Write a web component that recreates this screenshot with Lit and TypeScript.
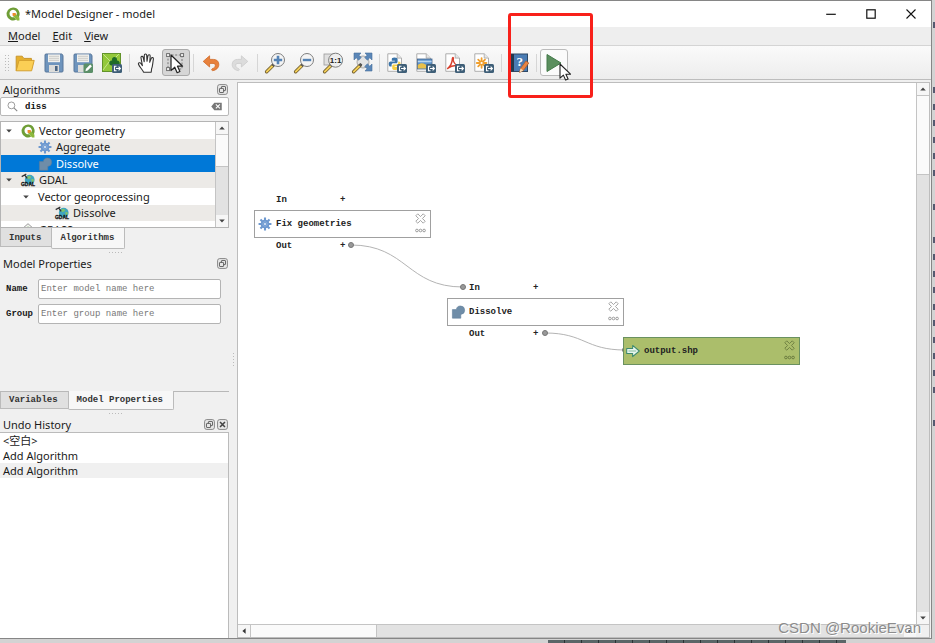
import { LitElement, html, css, svg, nothing } from "lit";
import { customElement, property, state } from "lit/decorators.js";
import { classMap } from "lit/directives/class-map.js";
import { styleMap } from "lit/directives/style-map.js";

const exportBadge = svg`
  <rect x="10" y="11" width="10" height="9" rx="1.5" fill="#3f5f78"/>
  <path d="M14.5 13.2h-2v4.6h2M14 15.5h4.2M16.6 13.7l1.8 1.8-1.8 1.8" fill="none" stroke="#fff" stroke-width="1.1"/>`;

const page = svg`
  <path d="M.8 .8h9.4l4.3 4.3v13.2H.8z" fill="#fff" stroke="#a6a6a6" stroke-width=".9"/>
  <path d="M10.2 .8v4.3h4.3" fill="#e6e6e6" stroke="#a6a6a6" stroke-width=".8"/>`;

const handle = svg`
  <path d="M8.2 12.2 1.6 18.8" stroke="#6d5a2c" stroke-width="3.4" stroke-linecap="round"/>
  <path d="M7.2 13.2 1.8 18.6" stroke="#f2ce58" stroke-width="2" stroke-linecap="round"/>
  <path d="M9.4 10.8 7.6 12.8" stroke="#555" stroke-width="2.6"/>`;

const floppy = svg`
  <path d="M1.5 1h16.2l1.3 1.3V18a1 1 0 0 1-1 1H2a1 1 0 0 1-1-1V2z" fill="#6e94bd" stroke="#58779a" stroke-width="1"/>
  <rect x="4" y="1.4" width="12" height="7.8" fill="#f1f1ee"/>
  <path d="M5 3.3h10M5 5.3h10M5 7.3h10" stroke="#c0c0bd" stroke-width=".8"/>
  <rect x="5" y="12" width="10" height="7" fill="#dcdcda"/>
  <rect x="11" y="13" width="2.6" height="5" fill="#4c6683"/>`;

const qLogo = svg`
  <path d="M10 .8a9.2 9.2 0 1 0 4.6 17.2l-3.2-3.4A5.3 5.3 0 1 1 14.9 12l3.1 2.9A9.2 9.2 0 0 0 10 .8z" fill="#6f9e36"/>
  <path d="M10 9.2h3.2l6 6.2v3.8h-3.4L10 13z" fill="#8cb83c"/>
  <path d="M9.4 8.6h3.8l1.6 1.8-2.6 2.6-2.8-.6z" fill="#ee8a2c"/>`;

const gearShape = svg`
  <g stroke="#6d98cf" stroke-width="3">
    <path d="M10 .8v18.4M.8 10h18.4M3.5 3.5l13 13M16.5 3.5l-13 13"/>
  </g>
  <circle cx="10" cy="10" r="6.2" fill="#6d98cf"/>
  <circle cx="10" cy="10" r="3.2" fill="none" stroke="#8fb2de" stroke-width="1.2"/>
  <circle cx="10" cy="10" r="1.4" fill="#e6eef8"/>`;

const arrowCursor = svg`<path d="M0 0v14.2l3.4-3.1 2.2 5 2.5-1.1-2.2-4.8h4.6z" fill="#fff" stroke="#222" stroke-width="1.1" stroke-linejoin="round"/>`;

const icons: Record<string, unknown> = {
  qgis: qLogo,
  gear: gearShape,
  folder: svg`
    <path d="M1.2 17.8V3.2h6l1.6 2.2h7.6v3" fill="#e6b02e" stroke="#c9952a" stroke-width="1"/>
    <path d="M1.2 17.8 4 7.4h15.2l-2.6 10.4z" fill="#fbcf55" stroke="#d4a030" stroke-width="1" stroke-linejoin="round"/>`,
  save: floppy,
  saveas: svg`${floppy}
    <rect x="10.5" y="10.5" width="9.5" height="9.5" rx="1.5" fill="#5b8f68"/>
    <path d="m12.4 18.2.6-2.4 4.2-4.2 1.7 1.7-4.2 4.2z" fill="#fff"/>`,
  exportmodel: svg`
    <rect x=".5" y=".5" width="18" height="18" fill="#93c83a" stroke="#62932a" stroke-width="1"/>
    <path d="M1 1 9 9l8-8M1 17l6-8" stroke="#c6e58a" stroke-width="1" fill="none"/>
    <path d="M12.500 4a2.600 2.600 0 0 1 2.400 3.400 2.600 2.600 0 1 1-1.600 4.400V15h-1.600v-3.200a2.600 2.600 0 1 1-1.600-4.400A2.600 2.600 0 0 1 12.500 4z" fill="#1f6b28"/>
    ${exportBadge}`,
  hand: svg`<path d="M6.5 19.2c-.6-2.4-3.8-4.8-5-7.9-.6-1.6 1.600-2.200 2.600-.6l1.300 1.900L4 4.800c-.3-1.700 1.800-2 2.200-.4l1 4.400L7.300 2.400C7.300.6 9.600.6 9.700 2.300l.3 6 .9-5.400c.3-1.700 2.400-1.400 2.300.3l-.5 6 1.600-3.800c.6-1.500 2.400-.8 2.100.7-.8 4.400-.7 7.300-1.800 9.700l-.4 3.400z" fill="#fff" stroke="#333" stroke-width="1.1" stroke-linejoin="round"/>`,
  select: svg`
    <rect x="2" y="2" width="14" height="14" fill="none" stroke="#777" stroke-width="1" stroke-dasharray="2 1.6"/>
    <g fill="#eee" stroke="#666" stroke-width=".9"><rect x=".6" y=".6" width="3" height="3"/><rect x="14.6" y=".6" width="3" height="3"/><rect x=".6" y="14.6" width="3" height="3"/></g>
    <g transform="translate(5 2) scale(1.1)">${arrowCursor}</g>`,
  undo: svg`<path d="M2.2 8.4 8.600 2.800v3.600h3.800c3.600 0 5.400 2.200 5.400 5 0 3.400-2.400 5.600-6 6.200-1.300.2-1.500-1.500-.3-2 1.800-.6 2.800-1.800 2.800-3.200 0-1.300-.8-2-2.300-2H8.600V14z" fill="#e8813c" stroke="#cf6a28" stroke-width=".8" stroke-linejoin="round"/>`,
  redo: svg`<path d="M17.800 8.400 11.400 2.800v3.600H7.600c-3.600 0-5.400 2.200-5.400 5 0 3.400 2.400 5.600 6 6.200 1.300.2 1.500-1.500.3-2-1.800-.6-2.800-1.800-2.800-3.200 0-1.300.8-2 2.300-2h3.400V14z" fill="#dcdcdc" stroke="#cbcbcb" stroke-width=".8" stroke-linejoin="round"/>`,
  zoomin: svg`${handle}<circle cx="13" cy="7" r="6.5" fill="#f4f4f4" stroke="#7e7e7e" stroke-width="1"/><path d="M13 2.8v8.4M8.8 7h8.4" stroke="#5583b5" stroke-width="2.6"/>`,
  zoomout: svg`${handle}<circle cx="13" cy="7" r="6.5" fill="#f4f4f4" stroke="#7e7e7e" stroke-width="1"/><path d="M8.8 7h8.4" stroke="#5583b5" stroke-width="2.4"/>`,
  zoomactual: svg`<rect x="1" y="1" width="10" height="11" fill="#e0e0e0" stroke="#999" stroke-width=".8"/>${handle}<circle cx="12.6" cy="7.2" r="7" fill="#eee" stroke="#7e7e7e" stroke-width="1"/>
    <text x="12.6" y="10" font-family="Liberation Sans" font-size="8" font-weight="700" text-anchor="middle" fill="#222">1:1</text>`,
  zoomfull: svg`<circle cx="11" cy="9" r="6" fill="#e4e4e4" stroke="#999" stroke-width=".8"/>${handle}
    <g fill="#5b87b8" stroke="#466f9c" stroke-width=".6">
      <path d="M2 0h7L7 2.200 9.200 4.600 6.600 7.200 4.200 4.800 2 7z"/>
      <path d="M20 0h-7l2 2.200-2.200 2.400 2.600 2.600 2.400-2.400L20 7z"/>
      <path d="M20 18h-7l2-2.200-2.200-2.400 2.600-2.600 2.400 2.400L20 11z"/>
    </g>`,
  python: svg`${page}
    <path d="M7.400 4.600c-2 0-2.600.7-2.600 1.800v1.300h3v.7H3.600C2.300 8.400 1.700 9.500 1.700 11s.6 2.600 1.700 2.600h1.200v-1.700c0-1 .8-1.700 1.800-1.700h2.800c.8 0 1.400-.7 1.400-1.500V6.400c0-1-.9-1.800-3.200-1.800z" fill="#3c74a8"/>
    <path d="M8 17c2 0 2.600-.7 2.600-1.800v-1.300h-3v-.7h4.200c1.300 0 1.700-1 1.700-2.500 0-1.400-.5-2.200-1.700-2.200h-.6v1.300c0 1-.8 1.700-1.800 1.700H6.600c-.8 0-1.400.7-1.400 1.500v2.200c0 1 .8 1.800 2.800 1.800z" fill="#f5cf45"/>
    ${exportBadge}`,
  image: svg`${page}<rect x="1.400" y="6" width="14.600" height="10" fill="#5c93cc" stroke="#47658a" stroke-width=".8"/><path d="M1.800 12c3-2.400 5-2 7.600-.6s4.400.4 6.200-.6v4.800H1.800z" fill="#e9c04a"/><path d="M1.800 8.500h13.800" stroke="#b9d6f0" stroke-width="1.600"/>${exportBadge}`,
  pdf: svg`${page}<path d="M2.600 15.600C5 13.600 7.200 9.800 7.400 5.400c.4-1.800 1.600-.6.800 1.600.5 3.200 2.400 5 5.600 6.200M3 15.200c3-2.400 6.400-3.200 10.600-2.400" fill="none" stroke="#d8402e" stroke-width="1.400" stroke-linecap="round"/>${exportBadge}`,
  svgfile: svg`${page}<g stroke="#f0a030" stroke-width="1.800" stroke-linecap="round"><path d="M7.600 5.200v9.600M2.800 10h9.600M4.200 6.600l6.800 6.800M11 6.600l-6.800 6.800"/></g><circle cx="7.600" cy="10" r="1.100" fill="#fff"/>${exportBadge}`,
  help: svg`<rect x=".5" y="1" width="18" height="17.500" fill="#4a7cb4" stroke="#2e4966" stroke-width="1"/><rect x=".5" y="1" width="4.500" height="17.500" fill="#26384c"/>
    <text x="10.800" y="12.500" font-family="Liberation Serif" font-size="13" font-weight="700" text-anchor="middle" fill="#fff">?</text>
    <path d="m10.500 19.500 1-4L17 8l2.800 2-5.500 7.600z" fill="#e98442" stroke="#b55a22" stroke-width=".7"/><path d="m10.500 19.500 1-4 2.800 2.100z" fill="#f3dcb8"/>`,
  run: svg`<path d="M3 1.500 17 10 3 18.500z" fill="#5b8f5e" stroke="#447a4a" stroke-width="1" stroke-linejoin="round"/>`,
  dissolve: svg`<path d="M2 6.500h5.600A6 6 0 1 1 14 13.400V18.800H2z" fill="#6f8da8" stroke="#5f7e9a" stroke-width=".8" stroke-linejoin="round"/>`,
  gdal: svg`<circle cx="12.400" cy="9.600" r="7" fill="#3fa5bf"/><path d="M9 5c2-1.600 4-1.400 5 .2s-1 2.600-2.600 3.200S8.200 7 9 5zM15 8.600c1.600-.6 3 .2 3.600 1.600l-1.400 3-2.400-1.400z" fill="#7fc36c"/>
    <path d="M1 5.200 7.600 1.400M5.400 3l3.400 4.800" stroke="#333" stroke-width="1.800"/>
    <text x="10" y="19" font-family="Liberation Sans" font-size="7" font-weight="700" text-anchor="middle" fill="#111" stroke="#111" stroke-width=".4">GDAL</text>`,
  grass: svg`<path d="m10 1 9 8-9 8-9-8z" fill="#f4f4f0" stroke="#888" stroke-width="1.200"/><path d="M10 14V5M10 12 6 7M10 12l4-5" stroke="#4f9a4a" stroke-width="1.200" fill="none"/>`,
  output: svg`<path d="M1 6.500h8.500V2L19 10l-9.500 8v-4.500H1z" fill="#e8f6ee" stroke="#3d8a6e" stroke-width="1.500" stroke-linejoin="round"/><path d="M3.500 10h11" stroke="#8cc0a6" stroke-width="1.500"/>`,
  search: svg`<circle cx="8" cy="8" r="6.200" fill="none" stroke="#888" stroke-width="1.500"/><path d="m12.600 12.600 6 6" stroke="#888" stroke-width="2"/>`,
  clear: svg`<path d="M6 3h13.500v14H6L.5 10z" fill="#777"/><path d="m8.800 6.200 7.400 7.400M16.200 6.200l-7.400 7.400" stroke="#fff" stroke-width="1.900"/>`,
  float: svg`<rect x="1" y="1" width="18" height="18" rx="4" fill="#e6e6e6" stroke="#777" stroke-width="1.500"/><rect x="8" y="4.500" width="7.500" height="7.500" rx="1" fill="none" stroke="#555" stroke-width="1.600"/><rect x="4.500" y="8" width="7.500" height="7.500" rx="1" fill="#e6e6e6" stroke="#555" stroke-width="1.600"/>`,
  close: svg`<rect x="1" y="1" width="18" height="18" rx="4" fill="#e6e6e6" stroke="#777" stroke-width="1.500"/><path d="m5.500 5.500 9 9M14.500 5.500l-9 9" stroke="#444" stroke-width="2.800"/>`,
  winmin: svg`<path d="M2 10.500h16" stroke="#111" stroke-width="2"/>`,
  winmax: svg`<rect x="3" y="3" width="14" height="14" fill="none" stroke="#111" stroke-width="2"/>`,
  winclose: svg`<path d="m2.500 2.500 15 15M17.500 2.500l-15 15" stroke="#111" stroke-width="1.800"/>`,
  delete: svg`<path d="m1.500 5 3.500-3.500 5 5 5-5L18.500 5l-5 5 5 5-3.500 3.500-5-5-5 5L1.500 15l5-5z" fill="none" stroke="currentColor" stroke-width="1.600" stroke-linejoin="round"/>`,
  dots: svg`<g fill="none" stroke="currentColor" stroke-width="1.800"><circle cx="3.500" cy="10" r="2.400"/><circle cx="10" cy="10" r="2.400"/><circle cx="16.500" cy="10" r="2.400"/></g>`,
  up: svg`<path d="M3 14 10 6l7 8z" fill="#444"/>`,
  down: svg`<path d="M3 6l7 8 7-8z" fill="#444"/>`,
  left: svg`<path d="M14 3 6 10l8 7z" fill="#333"/>`,
  right: svg`<path d="M6 3l8 7-8 7z" fill="#333"/>`,
};

@customElement("ui-icon")
class UiIcon extends LitElement {
  @property() name = "";
  static styles = css`
    :host { display: inline-flex; flex: none; width: 20px; height: 20px; }
    svg { width: 100%; height: 100%; overflow: visible; }
  `;
  render() {
    return html`<svg viewBox="0 0 20 20" aria-hidden="true">${icons[this.name]}</svg>`;
  }
}

interface NodeData {
  label: string;
  icon: string;
  x: number;
  y: number;
  kind: "algorithm" | "output";
}

@customElement("model-node")
class ModelNode extends LitElement {
  @property({ attribute: false }) data!: NodeData;
  static styles = css`
    :host { display: block; width: 177px; font: 700 9px/14px "Liberation Mono", monospace; color: #222; }
    .port { display: flex; height: 14px; padding-left: 22px; }
    .port span { width: 64px; }
    .box {
      box-sizing: border-box; display: flex; align-items: center; gap: 4px; height: 28px; margin: 3px 0 1px;
      padding: 0 4px 0 3px; background: #fff; border: 1px solid #a0a0a0;
    }
    .box.output { background: #abbe6b; border-color: #6a9160; margin: 0; padding-left: 2px; }
    .name { flex: 1; }
    .tools { display: flex; flex-direction: column; align-items: center; gap: 1px; color: #999; }
    .output .tools { color: #697a3f; }
    button { display: flex; padding: 0; border: 0; background: none; color: inherit; }
    .node-icon { width: 14px; height: 14px; }
    .tool-icon { width: 11px; height: 11px; }
  `;
  render() {
    const { label, icon, kind } = this.data;
    const port = (text: string) => kind === "algorithm" ? html`<div class="port"><span>${text}</span>+</div>` : nothing;
    return html`
      ${port("In")}
      <div class=${classMap({ box: true, output: kind === "output" })}>
        <ui-icon class="node-icon" name=${icon}></ui-icon>
        <span class="name">${label}</span>
        <span class="tools">
          <button aria-label="Delete"><ui-icon class="tool-icon" name="delete"></ui-icon></button>
          <button aria-label="Edit"><ui-icon class="tool-icon" name="dots"></ui-icon></button>
        </span>
      </div>
      ${port("Out")}`;
  }
}

@customElement("app-root")
class AppRoot extends LitElement {
  @state() private query = "diss";

  private tools = [
    ["folder:Open", "save:Save", "saveas:Save as", "exportmodel:Save in project"],
    ["hand:Pan", "select:Select"],
    ["undo:Undo", "redo:Redo"],
    ["zoomin:Zoom in", "zoomout:Zoom out", "zoomactual:Zoom to 100%", "zoomfull:Zoom full"],
    ["python:Export as script", "image:Export as image", "pdf:Export as PDF", "svgfile:Export as SVG"],
    ["help:Edit help"],
    ["run:Run model"],
  ];

  private tree = [
    { level: 0, arrow: true, icon: "qgis", label: "Vector geometry" },
    { level: 1, arrow: false, icon: "gear", label: "Aggregate" },
    { level: 1, arrow: false, icon: "dissolve", label: "Dissolve", selected: true },
    { level: 0, arrow: true, icon: "gdal", label: "GDAL" },
    { level: 1, arrow: true, icon: "", label: "Vector geoprocessing" },
    { level: 2, arrow: false, icon: "gdal", label: "Dissolve" },
    { level: 0, arrow: true, icon: "grass", label: "GRASS" },
  ];

  private nodes: NodeData[] = [
    { label: "Fix geometries", icon: "gear", x: 16, y: 110, kind: "algorithm" },
    { label: "Dissolve", icon: "dissolve", x: 209, y: 198, kind: "algorithm" },
    { label: "output.shp", icon: "output", x: 385, y: 254, kind: "output" },
  ];

  private links = [
    [113, 162, 225, 204],
    [307, 250, 387, 267],
  ];

  static styles = css`
    :host {
      display: block; position: relative; box-sizing: border-box; height: 100vh; padding: 0 3px 4px 0; overflow: hidden;
      background: #d3d3d3; color: #1a1a1a; font: 11px/16px "Noto Sans", "Noto Sans CJK SC", sans-serif;
    }
    * { box-sizing: border-box; }
    button { padding: 0; border: 0; background: none; font: inherit; color: inherit; }
    .window {
      display: flex; flex-direction: column; height: 100%; background: #f0f0f0;
      border: solid #868686; border-width: 1px 1px 1px 0;
    }
    .titlebar { display: flex; align-items: center; flex: none; height: 26px; padding-left: 6px; background: #fff; }
    .titlebar h1 { flex: 1; margin: 0; padding-left: 5px; font: inherit; }
    .logo { width: 14px; height: 14px; }
    .win { display: flex; justify-content: center; width: 40px; }
    .win ui-icon { width: 12px; height: 12px; }
    .menubar { display: flex; flex: none; gap: 12px; height: 19px; padding-left: 8px; line-height: 18px; background: #eee; border-bottom: 1px solid #d4d4d4; }
    .toolbar {
      display: flex; align-items: center; flex: none; gap: 1px; height: 34px; padding-left: 4px;
      background: linear-gradient(#fafafa, #ededed); border-bottom: 1px solid #bdbdbd;
    }
    .grip { width: 6px; height: 18px; background: radial-gradient(circle, #bbb 1px, transparent 1px) 0 0 / 3px 3px; }
    .tool { display: flex; align-items: center; justify-content: center; width: 28px; height: 27px; border-radius: 3px; }
    .tool.active { background: #d6d6d6; border: 1px solid #aaa; }
    .tool.run { background: #fbfbfb; border: 1px solid #bbb; }
    .sep { width: 1px; height: 18px; margin: 0 2px; background: #d6d6d6; }
    .body { display: flex; flex: 1; min-height: 0; padding: 2px 1px 0 0; }
    .dock { display: flex; flex-direction: column; flex: none; width: 229px; }
    .splitter { display: flex; align-items: center; justify-content: center; width: 8px; }
    .splitter i { width: 3px; height: 16px; background: radial-gradient(circle, #bbb 1px, transparent 1px) 0 0 / 3px 3px; }
    .panel-head { display: flex; align-items: center; gap: 2px; flex: none; height: 15px; padding: 0 1px 0 3px; }
    .panel-head h2 { flex: 1; margin: 0; font: inherit; }
    .panel-head button { display: flex; }
    .panel-head ui-icon { width: 11px; height: 11px; }
    .search {
      display: flex; align-items: center; gap: 7px; flex: none; height: 19px; padding: 0 6px; background: #fff;
      border: 1px solid #b8b8b8; border-radius: 2px;
    }
    .search ui-icon { width: 11px; height: 11px; }
    .search button { display: flex; }
    input { min-width: 0; flex: 1; padding: 0; border: 0; outline: 0; background: none; color: #111; font: 9px/14px "Liberation Mono", monospace; }
    .search input { font-weight: 700; }
    .tree-box { display: flex; flex: none; height: 107px; margin-top: 5px; border: 1px solid #b4b4b4; background: #fff; }
    .tree { flex: 1; min-width: 0; margin: 0; padding: 0; list-style: none; overflow: hidden; }
    .row { display: flex; align-items: center; gap: 4px; height: 17px; padding-left: 4px; white-space: nowrap; }
    .row:nth-child(even) { height: 16px; background: #eceae7; }
    .row.selected { background: #0078d7; color: #fff; }
    .row.l1 { padding-left: 21px; }
    .row.l2 { padding-left: 38px; }
    .row .arrow { width: 8px; height: 8px; flex: none; margin-right: 4px; }
    .row ui-icon { width: 14px; height: 14px; }
    .vbar { display: flex; flex-direction: column; flex: none; width: 13px; background: #e2e2e2; border-left: 1px solid #c4c4c4; }
    .hbar { display: flex; flex: none; height: 13px; background: #e2e2e2; border-top: 1px solid #c4c4c4; }
    .step { display: flex; align-items: center; justify-content: center; flex: none; width: 12px; height: 12px; background: #f6f6f6; }
    .step ui-icon { width: 8px; height: 8px; }
    .thumb { background: #fafafa; border: solid #c4c4c4; border-width: 1px 0; }
    .vbar .thumb { height: 80px; }
    .tree-box .thumb { height: 33px; }
    .hbar .thumb { width: 127px; border-width: 0 1px; }
    .space { flex: 1; }
    .tabs { display: flex; align-items: flex-start; flex: none; height: 21px; font: 700 9px/20px "Liberation Mono", monospace; color: #333; }
    .tab { height: 19px; padding: 0 10px 0 8px; background: #e0e0e0; border: 1px solid #bbb; border-top: 0; }
    .tab.current { height: 21px; background: #f7f7f7; border-radius: 0 0 2px 2px; margin-left: -1px; }
    .tabs.ruled { height: 19px; border-top: 1px solid #b8b8b8; line-height: 17px; }
    .ruled .tab { height: 17px; }
    .ruled .tab.current { margin-top: -1px; height: 19px; }
    .dots { flex: none; width: 14px; height: 3px; margin: 2px auto; background: radial-gradient(circle, #bbb 1px, transparent 1px) 0 0 / 3px 3px; }
    .form { display: grid; flex: none; grid-template-columns: auto 1fr; gap: 5px; align-items: center; height: 120px; align-content: start; padding: 8px 8px 0 6px; font: 700 9px/14px "Liberation Mono", monospace; }
    .field { height: 20px; padding: 0 2px; background: #fff; border: 1px solid #b4b4b4; border-radius: 2px; }
    .field::placeholder { color: #777; }
    .history { flex: 1; min-height: 0; margin: 0; padding: 0; list-style: none; line-height: 15px; background: #fff; border: solid #bbb; border-width: 1px 1px 0 0; overflow: hidden; }
    .history li { height: 15px; padding-left: 3px; }
    .history li.current { background: #f0f0f0; }
    .view { display: flex; flex-direction: column; flex: 1; min-width: 0; border: 1px solid #bdbdbd; background: #fff; }
    .view-main { display: flex; flex: 1; min-height: 0; }
    .canvas { position: relative; flex: 1; min-width: 0; overflow: hidden; }
    .links { position: absolute; inset: 0; width: 100%; height: 100%; }
    .links path { fill: none; stroke: #b4b4b4; }
    .links circle { fill: #999; stroke: #777; }
    model-node { position: absolute; }
    .corner { width: 13px; background: #f0f0f0; }
    .highlight { position: absolute; left: 508px; top: 13px; width: 85px; height: 85px; border: 3px solid #f8201a; border-radius: 3px; pointer-events: none; }
    .cursor { position: absolute; left: 559px; top: 63px; width: 12px; height: 18px; pointer-events: none; }
    .watermark { position: absolute; right: 14px; bottom: 6px; font: 15px/18px "Liberation Sans", sans-serif; color: #8c8c8c; text-shadow: 1px 1px #fff; }
    .behind-bottom { position: absolute; left: 548px; right: 89px; bottom: 0; height: 3px; background: repeating-linear-gradient(90deg, #5b6668 0 16px, #2b3234 16px 17px); }
    .behind-right { position: absolute; right: 0; top: 0; width: 2px; height: 100%; }
  `;

  private stepButton(dir: string) {
    return html`<button class="step" aria-label="Scroll ${dir}"><ui-icon name=${dir}></ui-icon></button>`;
  }

  private panelHead(title: string, closable = false) {
    return html`<header class="panel-head">
      <h2>${title}</h2>
      <button aria-label="Float ${title}"><ui-icon name="float"></ui-icon></button>
      ${closable ? html`<button aria-label="Close ${title}"><ui-icon name="close"></ui-icon></button>` : nothing}
    </header>`;
  }

  private tabs(labels: string[], ruled = false) {
    return html`<div class=${classMap({ tabs: true, ruled })} role="tablist">
      ${labels.map((l, i) => html`<button role="tab" aria-selected=${i === 1} class=${classMap({ tab: true, current: i === 1 })}>${l}</button>`)}
    </div>`;
  }

  render() {
    return html`
      <div class="window">
        <header class="titlebar">
          <ui-icon class="logo" name="qgis"></ui-icon>
          <h1>*Model Designer - model</h1>
          ${["min", "max", "close"].map((n) => html`<button class="win" aria-label=${n}><ui-icon name="win${n}"></ui-icon></button>`)}
        </header>
        <nav class="menubar">
          <button><u>M</u>odel</button><button><u>E</u>dit</button><button><u>V</u>iew</button>
        </nav>
        <div class="toolbar" role="toolbar">
          <span class="grip"></span>
          ${this.tools.map((group, i) => html`
            ${i ? html`<span class="sep"></span>` : nothing}
            ${group.map((t) => {
              const [icon, label] = t.split(":");
              return html`<button class=${classMap({ tool: true, active: icon === "select", run: icon === "run" })} aria-label=${label}><ui-icon name=${icon}></ui-icon></button>`;
            })}`)}
        </div>
        <main class="body">
          <aside class="dock">
            ${this.panelHead("Algorithms")}
            <div class="search">
              <ui-icon name="search"></ui-icon>
              <input aria-label="Search algorithms" .value=${this.query} @input=${(e: Event) => (this.query = (e.target as HTMLInputElement).value)} />
              <button aria-label="Clear" @click=${() => (this.query = "")}><ui-icon name="clear"></ui-icon></button>
            </div>
            <div class="tree-box">
              <ul class="tree" role="tree">
                ${this.tree.map((r) => html`<li role="treeitem" class=${classMap({ row: true, selected: !!r.selected, [`l${r.level}`]: true })}>
                  ${r.arrow ? html`<ui-icon class="arrow" name="down"></ui-icon>` : html`<span class="arrow"></span>`}
                  ${r.icon ? html`<ui-icon name=${r.icon}></ui-icon>` : nothing}
                  <span>${r.label}</span>
                </li>`)}
              </ul>
              <div class="vbar">${this.stepButton("up")}<div class="thumb"></div><div class="space"></div>${this.stepButton("down")}</div>
            </div>
            ${this.tabs(["Inputs", "Algorithms"])}
            <div class="dots"></div>
            ${this.panelHead("Model Properties")}
            <div class="form">
              <label for="name">Name</label><input class="field" id="name" placeholder="Enter model name here" />
              <label for="group">Group</label><input class="field" id="group" placeholder="Enter group name here" />
            </div>
            ${this.tabs(["Variables", "Model Properties"], true)}
            <div class="dots"></div>
            ${this.panelHead("Undo History", true)}
            <ol class="history"><li>&lt;空白&gt;</li><li>Add Algorithm</li><li class="current">Add Algorithm</li></ol>
          </aside>
          <div class="splitter"><i></i></div>
          <section class="view">
            <div class="view-main">
              <div class="canvas">
                <svg class="links">
                  ${this.links.map(([x1, y1, x2, y2]) => {
                    const m = (x1 + x2) / 2;
                    return svg`<path d="M${x1} ${y1}C${m} ${y1} ${m} ${y2} ${x2} ${y2}"/><circle cx=${x1} cy=${y1} r="2.500"/><circle cx=${x2} cy=${y2} r="2.500"/>`;
                  })}
                </svg>
                ${this.nodes.map((n) => html`<model-node .data=${n} style=${styleMap({ left: `${n.x}px`, top: `${n.y}px` })}></model-node>`)}
              </div>
              <div class="vbar">${this.stepButton("up")}<div class="thumb"></div><div class="space"></div>${this.stepButton("down")}</div>
            </div>
            <div class="hbar">${this.stepButton("left")}<div class="thumb"></div><div class="space"></div>${this.stepButton("right")}<div class="corner"></div></div>
          </section>
        </main>
      </div>
      <div class="behind-bottom"></div>
      <svg class="behind-right" aria-hidden="true">
        ${[25, 90, 107, 123, 140, 156, 173, 207, 240, 257, 274, 290, 307, 323, 340, 356, 373, 390, 423].map((y) => svg`<rect x="0" y=${y - 3} width="2" height="6" fill="#555a70"/>`)}
      </svg>
      <div class="highlight"></div>
      <svg class="cursor" viewBox="-1 -1 12 18" aria-hidden="true">${arrowCursor}</svg>
      <div class="watermark">CSDN @RookieEvan</div>`;
  }
}
